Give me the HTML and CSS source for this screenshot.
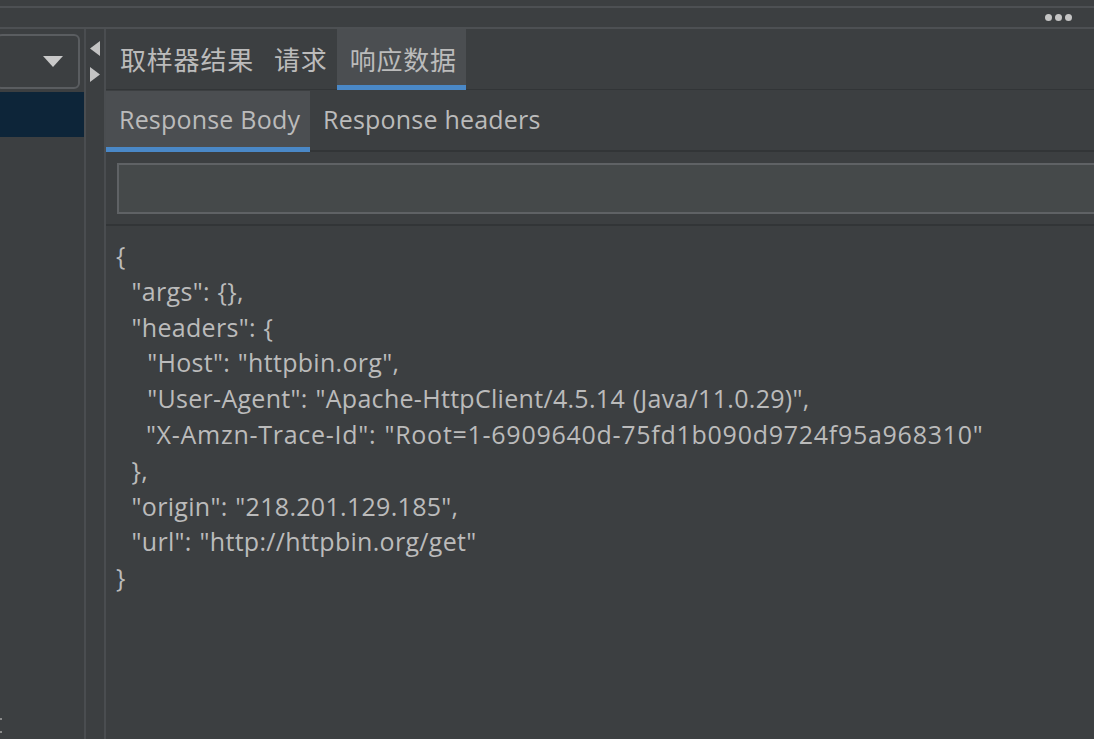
FILE: index.html
```html
<!DOCTYPE html>
<html lang="zh-CN">
<head>
    <meta charset="UTF-8">
    <meta name="viewport" content="width=device-width, initial-scale=1.0">
    <title>响应数据</title>
    <link rel="stylesheet" href="styles.css">
</head>
<body>
    <div class="top-strip"></div>
    <div class="toolbar">
        <span class="more"><i></i><i></i><i></i></span>
    </div>

    <div class="main">
        <div class="left">
            <div class="combo">
                <svg class="combo-arrow" width="20" height="11" viewBox="0 0 20 11">
                    <polygon points="0,0 20,0 10,11" fill="#c9c9c9"/>
                </svg>
            </div>
            <div class="tree-row selected"></div>
            <div class="corner-marks"><i></i><i></i></div>
        </div>

        <div class="splitter">
            <svg width="10" height="15" viewBox="0 0 10 15">
                <polygon points="10,0 10,15 0,7.5" fill="#c3c3c3"/>
            </svg>
            <svg width="10" height="15" viewBox="0 0 10 15">
                <polygon points="0,0 0,15 10,7.5" fill="#c3c3c3"/>
            </svg>
        </div>

        <div class="right">
            <div class="tabs tabs-top">
                <div class="tab">取样器结果</div>
                <div class="tab">请求</div>
                <div class="tab active">响应数据</div>
            </div>
            <div class="tabs tabs-sub">
                <div class="tab active">Response Body</div>
                <div class="tab">Response headers</div>
            </div>
            <div class="search-area">
                <div class="search-field"></div>
            </div>
            <div class="body-text">
                <div class="line">{</div>
                <div class="line">  "args": {},</div>
                <div class="line">  "headers": {</div>
                <div class="line">    "Host": "httpbin.org",</div>
                <div class="line">    "User-Agent": "Apache-HttpClient/4.5.14 (Java/11.0.29)",</div>
                <div class="line wide">    "X-Amzn-Trace-Id": "Root=1-6909640d-75fd1b090d9724f95a968310"</div>
                <div class="line">  },</div>
                <div class="line">  "origin": "218.201.129.185",</div>
                <div class="line">  "url": "http://httpbin.org/get"</div>
                <div class="line">}</div>
            </div>
        </div>
    </div>
</body>
</html>
```

FILE: styles.css
```css
html, body {
    margin: 0;
    height: 100%;
}
body {
    background: #3c3f41;
    color: #bbbbbb;
    font-family: "Open Sans", "Noto Sans CJK SC", sans-serif;
    overflow: hidden;
}
.top-strip {
    height: 6px;
}
.toolbar {
    height: 19px;
    border-top: 2px solid #4d5053;
    border-bottom: 2px solid #4d5053;
    display: flex;
    justify-content: flex-end;
    align-items: center;
    padding-right: 22px;
}
.more {
    display: flex;
    gap: 3px;
}
.more i {
    width: 7px;
    height: 7px;
    border-radius: 50%;
    background: #c4c4c4;
}
.main {
    display: flex;
    height: calc(100% - 29px);
}
.left {
    width: 84px;
    border-right: 2px solid #4a4d50;
    position: relative;
    padding-top: 5px;
}
.combo {
    width: 84px;
    height: 55px;
    margin-left: -4px;
    border: 2px solid #5a5d60;
    border-radius: 6px;
    display: flex;
    align-items: center;
    justify-content: flex-end;
    padding-right: 15px;
    box-sizing: border-box;
}
.tree-row {
    height: 45px;
    margin-top: 3px;
}
.tree-row.selected {
    background: #0d2539;
}
.corner-marks {
    position: absolute;
    left: 0;
    bottom: 6px;
    display: flex;
    flex-direction: column;
    gap: 11px;
}
.corner-marks i {
    width: 2px;
    height: 2px;
    background: #8a8a8a;
}
.splitter {
    width: 18px;
    border-right: 2px solid #4a4d50;
    display: flex;
    flex-direction: column;
    align-items: center;
    padding-top: 12px;
    gap: 11px;
}
.right {
    flex: 1;
    min-width: 0;
    display: flex;
    flex-direction: column;
}
.tabs {
    display: flex;
    border-bottom: 1px solid #323537;
}
.tab {
    padding: 0 12px;
    display: flex;
    align-items: center;
    border-bottom: 5px solid transparent;
    margin-bottom: -1px;
}
.tab.active {
    background: #4b4e51;
    border-bottom-color: #4a88c7;
}
.tabs-top {
    height: 60px;
}
.tabs-top .tab {
    font-size: 26px;
    letter-spacing: 0.8px;
    font-family: "Noto Sans CJK SC", sans-serif;
    padding: 2px 9px 0 11px;
}
.tabs-top .tab:first-child {
    padding-left: 14px;
}
.tabs-top .tab.active {
    padding-left: 13px;
}
.tabs-sub {
    height: 60px;
    border-bottom-width: 2px;
}
.tabs-sub .tab {
    font-size: 25px;
    letter-spacing: 0.2px;
    padding: 0 9px 0 13px;
    margin-bottom: -2px;
    height: 56px;
    align-self: flex-end;
}
.tabs-sub .tab.active {
    padding-right: 10px;
}
.search-area {
    padding: 11px 0 10px 11px;
    border-bottom: 2px solid #323537;
}
.search-field {
    height: 51px;
    margin-right: -20px;
    box-sizing: border-box;
    border: 2px solid #5f6265;
    background: #45494a;
}
.body-text {
    padding: 12px 0 0 10px;
    font-family: "Open Sans", sans-serif;
    font-size: 25px;
    letter-spacing: 0.3px;
    word-spacing: 1px;
    line-height: 35.8px;
    color: #bbbbbb;
}
.line {
    white-space: pre;
}
.line.wide {
    letter-spacing: 0.73px;
    margin-left: -3px;
}
```
